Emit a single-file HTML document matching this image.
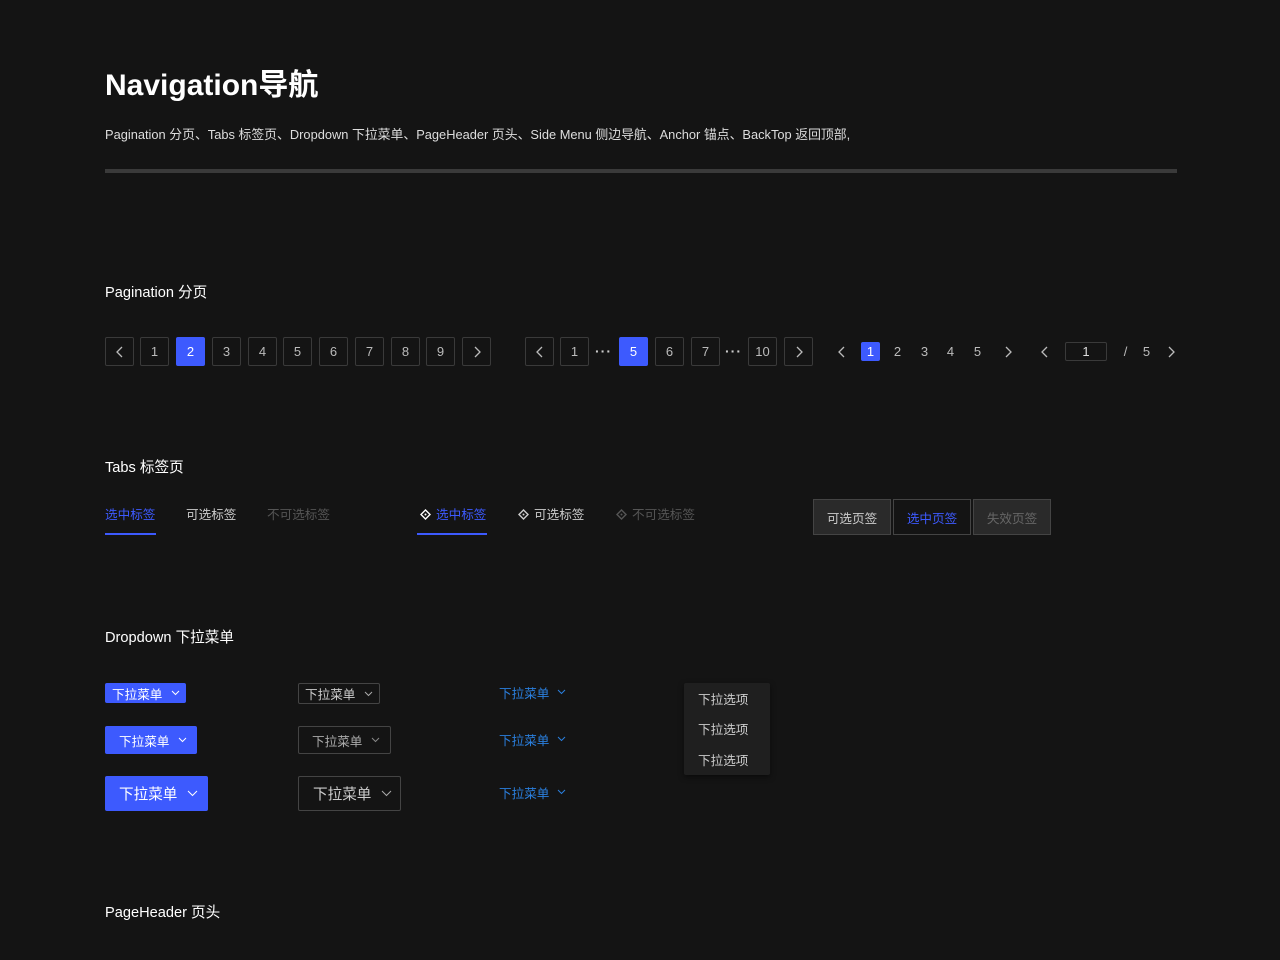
<!DOCTYPE html>
<html><head><meta charset="utf-8"><style>
*{margin:0;padding:0;box-sizing:border-box}
body{width:1280px;height:960px;background:#141414;color:#fff;font-family:"Liberation Sans","Noto Sans CJK SC",sans-serif;position:relative;overflow:hidden}
.a{position:absolute}
.pb{position:absolute;top:337px;width:29px;height:29px;border:1px solid #3a3a3a;border-radius:2px;color:#bbb;font-size:13px;display:flex;align-items:center;justify-content:center;background:#141414}
.pb.on{background:#3d5afe;border-color:#3d5afe;color:#fff}
.pn{position:absolute;top:342px;width:19px;height:19px;font-size:13px;color:#bbb;display:flex;align-items:center;justify-content:center}
.dots{position:absolute;top:343px;color:#ccc;font-size:14px;letter-spacing:1px;font-weight:bold}
.h2{position:absolute;left:105px;font-size:14.6px;color:#fff}
.t{position:absolute;top:504px;font-size:12.6px}
.ct{position:absolute;top:499px;height:36px;width:78px;border:1px solid #444;background:#2a2a2a;font-size:12.6px;display:flex;align-items:center;justify-content:center;color:#ccc}
.dd{position:absolute;display:flex;align-items:center;border-radius:2px}
.blue{background:#3d5afe;color:#fff}
.out{border:1px solid #444;color:#ccc}
.lk{color:#2a7fde;font-size:12.6px}
svg{display:block}
</style></head><body>
<div class="a" style="left:105px;top:67px;font-size:30px;font-weight:bold;line-height:38px">Navigation导航</div>
<div class="a" style="left:105px;top:124px;font-size:12.85px;color:#ddd">Pagination 分页、Tabs 标签页、Dropdown 下拉菜单、PageHeader 页头、Side Menu 侧边导航、Anchor 锚点、BackTop 返回顶部,</div>
<div class="a" style="left:105px;top:169px;width:1072px;height:4px;background:#3a3a3a"></div>

<div class="h2" style="top:281px">Pagination 分页</div>
<div class="pb" style="left:105px"><svg width="10" height="12"><path d="M7 1L2 6l5 5" stroke="#bbb" fill="none" stroke-width="1.3"/></svg></div>
<div class="pb" style="left:140px">1</div>
<div class="pb on" style="left:176px">2</div>
<div class="pb" style="left:212px">3</div>
<div class="pb" style="left:248px">4</div>
<div class="pb" style="left:283px">5</div>
<div class="pb" style="left:319px">6</div>
<div class="pb" style="left:355px">7</div>
<div class="pb" style="left:391px">8</div>
<div class="pb" style="left:426px">9</div>
<div class="pb" style="left:462px"><svg width="10" height="12"><path d="M3 1l5 5-5 5" stroke="#bbb" fill="none" stroke-width="1.3"/></svg></div>

<div class="pb" style="left:525px"><svg width="10" height="12"><path d="M7 1L2 6l5 5" stroke="#bbb" fill="none" stroke-width="1.3"/></svg></div>
<div class="pb" style="left:560px">1</div>
<div class="dots" style="left:595px">···</div>
<div class="pb on" style="left:619px">5</div>
<div class="pb" style="left:655px">6</div>
<div class="pb" style="left:691px">7</div>
<div class="dots" style="left:725px">···</div>
<div class="pb" style="left:748px">10</div>
<div class="pb" style="left:784px"><svg width="10" height="12"><path d="M3 1l5 5-5 5" stroke="#bbb" fill="none" stroke-width="1.3"/></svg></div>

<div class="pn" style="left:832px"><svg width="10" height="12"><path d="M7 1L2 6l5 5" stroke="#bbb" fill="none" stroke-width="1.3"/></svg></div>
<div class="pn" style="left:861px;background:#3d5afe;color:#fff;border-radius:2px">1</div>
<div class="pn" style="left:888px">2</div>
<div class="pn" style="left:915px">3</div>
<div class="pn" style="left:941px">4</div>
<div class="pn" style="left:968px">5</div>
<div class="pn" style="left:998px"><svg width="10" height="12"><path d="M3 1l5 5-5 5" stroke="#bbb" fill="none" stroke-width="1.3"/></svg></div>
<div class="pn" style="left:1035px"><svg width="10" height="12"><path d="M7 1L2 6l5 5" stroke="#bbb" fill="none" stroke-width="1.3"/></svg></div>
<div class="a" style="left:1065px;top:342px;width:42px;height:19px;border:1px solid #3a3a3a;border-radius:2px;font-size:13px;color:#ddd;text-align:center;line-height:17px">1</div>
<div class="pn" style="left:1116px">/</div>
<div class="pn" style="left:1137px">5</div>
<div class="pn" style="left:1161px"><svg width="10" height="12"><path d="M3 1l5 5-5 5" stroke="#bbb" fill="none" stroke-width="1.3"/></svg></div>

<div class="h2" style="top:456px">Tabs 标签页</div>
<div class="t" style="left:105px;color:#3d5afe">选中标签</div>
<div class="a" style="left:105px;top:533px;width:51px;height:2px;background:#3d5afe"></div>
<div class="t" style="left:186px;color:#ccc">可选标签</div>
<div class="t" style="left:267px;color:#555">不可选标签</div>
<div class="a" style="left:420px;top:509px"><svg width="11" height="11"><path d="M5.5 1L10 5.5 5.5 10 1 5.5z" stroke="#fff" fill="none" stroke-width="1.4"/><circle cx="5.5" cy="5.5" r="1" fill="#fff"/></svg></div>
<div class="t" style="left:436px;color:#3d5afe">选中标签</div>
<div class="a" style="left:417px;top:533px;width:70px;height:2px;background:#3d5afe"></div>
<div class="a" style="left:518px;top:509px"><svg width="11" height="11"><path d="M5.5 1L10 5.5 5.5 10 1 5.5z" stroke="#ccc" fill="none" stroke-width="1.4"/><circle cx="5.5" cy="5.5" r="1" fill="#ccc"/></svg></div>
<div class="t" style="left:534px;color:#ccc">可选标签</div>
<div class="a" style="left:616px;top:509px"><svg width="11" height="11"><path d="M5.5 1L10 5.5 5.5 10 1 5.5z" stroke="#555" fill="none" stroke-width="1.4"/><circle cx="5.5" cy="5.5" r="1" fill="#555"/></svg></div>
<div class="t" style="left:632px;color:#555">不可选标签</div>
<div class="ct" style="left:813px">可选页签</div>
<div class="ct" style="left:893px;background:#141414;color:#3d5afe">选中页签</div>
<div class="ct" style="left:973px;color:#666">失效页签</div>

<div class="h2" style="top:626px">Dropdown 下拉菜单</div>
<div class="dd blue" style="left:105px;top:683px;width:81px;height:20px;font-size:12.6px;padding-left:7px">下拉菜单<svg style="margin-left:9px" width="9" height="6"><path d="M1 1l3.5 3.5L8 1" stroke="#fff" fill="none"/></svg></div>
<div class="dd blue" style="left:105px;top:726px;width:92px;height:28px;font-size:12.6px;padding-left:14px">下拉菜单<svg style="margin-left:9px" width="9" height="6"><path d="M1 1l3.5 3.5L8 1" stroke="#fff" fill="none"/></svg></div>
<div class="dd blue" style="left:105px;top:776px;width:103px;height:35px;font-size:14.6px;padding-left:14px">下拉菜单<svg style="margin-left:10px" width="11" height="7"><path d="M1 1l4.5 4.5L10 1" stroke="#fff" fill="none"/></svg></div>
<div class="dd out" style="left:298px;top:683px;width:82px;height:21px;font-size:12.6px;padding-left:6px">下拉菜单<svg style="margin-left:9px" width="9" height="6"><path d="M1 1l3.5 3.5L8 1" stroke="#aaa" fill="none"/></svg></div>
<div class="dd out" style="left:298px;top:726px;width:93px;height:28px;font-size:12.6px;padding-left:13px;color:#aaa">下拉菜单<svg style="margin-left:9px" width="9" height="6"><path d="M1 1l3.5 3.5L8 1" stroke="#888" fill="none"/></svg></div>
<div class="dd out" style="left:298px;top:776px;width:103px;height:35px;font-size:14.6px;padding-left:14px">下拉菜单<svg style="margin-left:10px" width="11" height="7"><path d="M1 1l4.5 4.5L10 1" stroke="#aaa" fill="none"/></svg></div>
<div class="dd lk" style="left:499px;top:682px;height:20px">下拉菜单<svg style="margin-left:8px" width="9" height="6"><path d="M1 1l3.5 3.5L8 1" stroke="#2a7fde" fill="none"/></svg></div>
<div class="dd lk" style="left:499px;top:729px;height:20px">下拉菜单<svg style="margin-left:8px" width="9" height="6"><path d="M1 1l3.5 3.5L8 1" stroke="#2a7fde" fill="none"/></svg></div>
<div class="dd lk" style="left:499px;top:782px;height:20px">下拉菜单<svg style="margin-left:8px" width="9" height="6"><path d="M1 1l3.5 3.5L8 1" stroke="#2a7fde" fill="none"/></svg></div>
<div class="a" style="left:684px;top:683px;width:86px;height:92px;background:#1f1f1f;border-radius:2px;box-shadow:0 2px 6px rgba(0,0,0,.5);font-size:12.6px;color:#ccc">
<div class="a" style="left:14px;top:6px">下拉选项</div>
<div class="a" style="left:14px;top:36px">下拉选项</div>
<div class="a" style="left:14px;top:67px">下拉选项</div>
</div>

<div class="h2" style="top:901px">PageHeader 页头</div>
</body></html>
